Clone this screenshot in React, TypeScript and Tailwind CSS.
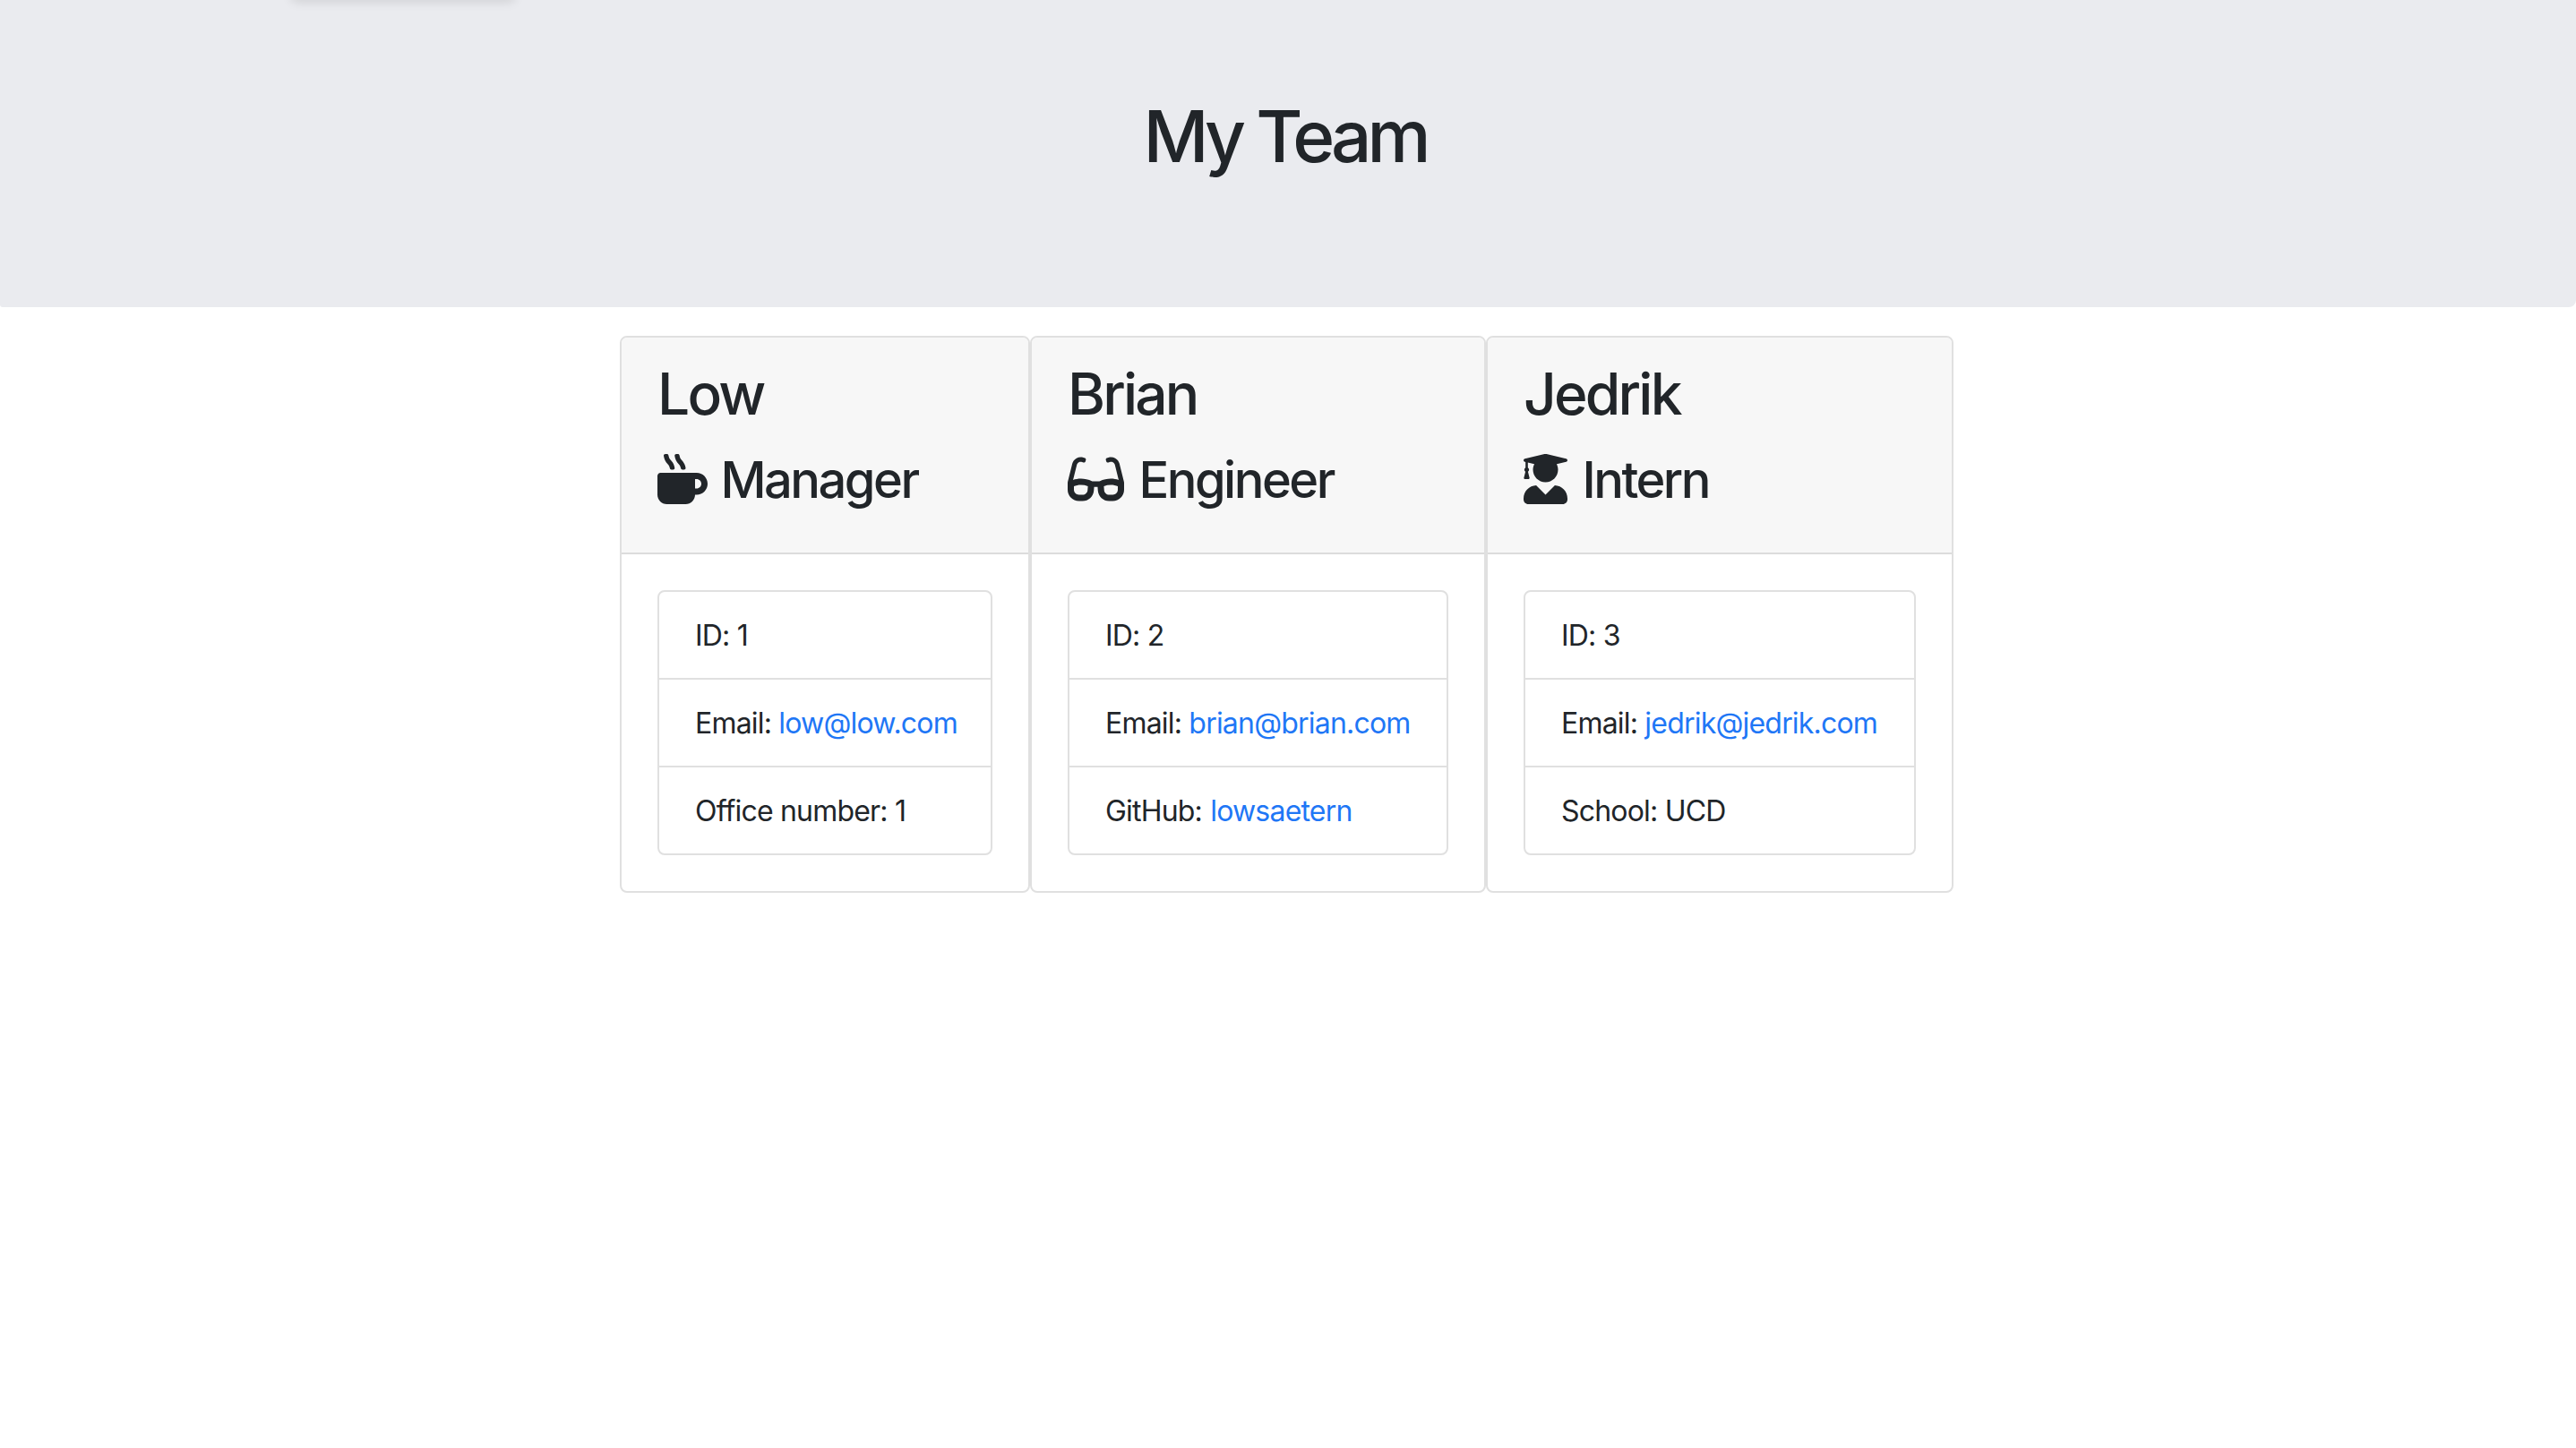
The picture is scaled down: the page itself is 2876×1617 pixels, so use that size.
import type { ReactNode } from "react"
import { FaGlasses, FaMugHot, FaUserGraduate } from "react-icons/fa"

type Member = {
  name: string
  role: string
  icon: ReactNode
  id: number
  email: string
  extra: ReactNode
  width: string
}

const team: Member[] = [
  {
    name: "Low",
    role: "Manager",
    icon: <FaMugHot className="mr-[2px] inline h-[56px] w-[56px] align-[-7px]" />,
    id: 1,
    email: "low@low.com",
    extra: "Office number: 1",
    width: "w-[458px]",
  },
  {
    name: "Brian",
    role: "Engineer",
    icon: <FaGlasses className="mr-[4px] inline h-[56px] w-[63px] align-[-7px]" />,
    id: 2,
    email: "brian@brian.com",
    extra: (
      <>
        GitHub: <a href="#" className="ml-[1px] text-[#1f77f6]">lowsaetern</a>
      </>
    ),
    width: "w-[509px]",
  },
  {
    name: "Jedrik",
    role: "Intern",
    icon: <FaUserGraduate className="mr-[4px] inline h-[56px] w-[49px] align-[-7px]" />,
    id: 3,
    email: "jedrik@jedrik.com",
    extra: "School: UCD",
    width: "w-[522px]",
  },
]

function TeamCard({ member }: { member: Member }) {
  return (
    <div className={`${member.width} shrink-0 overflow-hidden rounded-[8px] border-2 border-[#e0e0e0] bg-white`}>
      <div className="h-[242px] border-b-2 border-[#dcdcdc] bg-[#f7f7f7] px-[40px] pt-[24px]">
        <h2 className="text-[64px] leading-[77px] font-medium tracking-[-2.8px]">{member.name}</h2>
        <h3 className="mt-[25px] text-[56px] leading-[67px] font-medium tracking-[-2.5px] whitespace-nowrap">
          {member.icon} {member.role}
        </h3>
      </div>
      <div className="p-[40px]">
        <ul className="rounded-[8px] border-2 border-[#e0e0e0] text-[32px] leading-[48px] tracking-[-0.8px] whitespace-nowrap">
          <li className="border-b-2 border-[#e0e0e0] px-[40px] pt-[25px] pb-[23px]">ID: {member.id}</li>
          <li className="border-b-2 border-[#e0e0e0] px-[40px] pt-[25px] pb-[23px]">
            Email: <a href="#" className="text-[#1f77f6]">{member.email}</a>
          </li>
          <li className="px-[40px] pt-[25px] pb-[23px]">{member.extra}</li>
        </ul>
      </div>
    </div>
  )
}

export default function App() {
  return (
    <div className="relative min-h-[1617px] bg-white font-['Inter','Liberation_Sans',sans-serif] text-[#212529]">
      {/* shadow of something sitting just above the page edge */}
      <div className="absolute top-[-12px] left-[325px] h-[12px] w-[250px] rounded-full shadow-[0_2px_12px_rgba(0,0,0,0.12)]" />
      <header className="h-[343px] rounded-br-[8px] rounded-bl-[3px] bg-[#eaebef] pt-[104px] pr-[7px] text-center">
        <h1 className="text-[80px] leading-[96px] font-medium tracking-[-5px]">My Team</h1>
      </header>
      <main className="mt-[32px] flex justify-center pr-[3px]">
        {team.map((member) => (
          <TeamCard key={member.id} member={member} />
        ))}
      </main>
    </div>
  )
}
